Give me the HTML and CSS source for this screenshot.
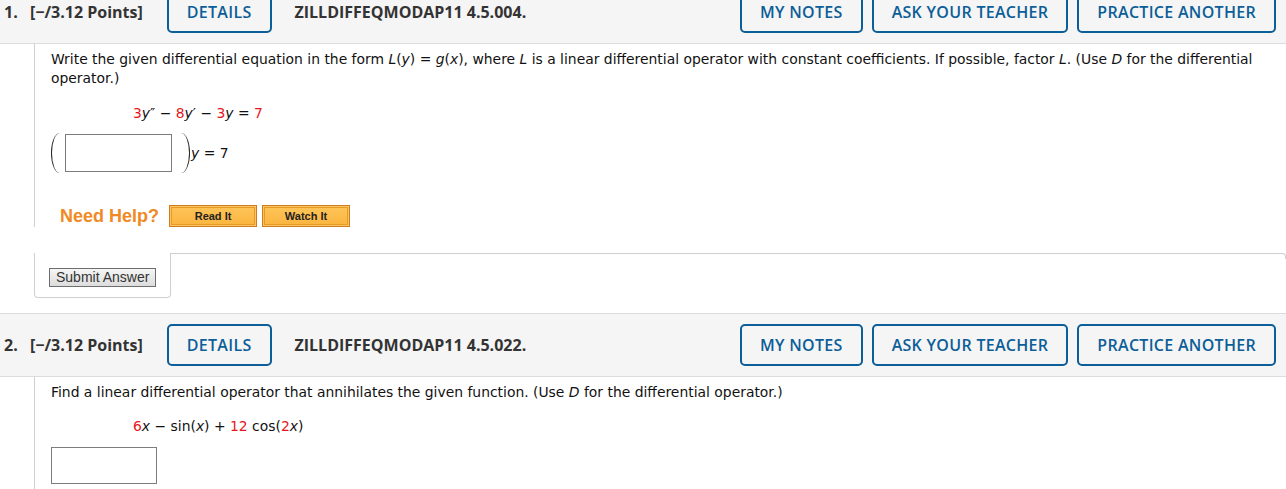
FILE: index.html
```html
<!DOCTYPE html>
<html lang="en">
<head>
<meta charset="utf-8">
<title>Questions</title>
<link rel="stylesheet" href="styles.css">
</head>
<body>
<div class="page">
  <section class="question">
    <div class="q-head">
      <span class="q-num">1.</span>
      <span class="q-points">[−/3.12 Points]</span>
      <button class="btn">DETAILS</button>
      <span class="q-title">ZILLDIFFEQMODAP11 4.5.004.</span>
      <div class="head-right">
        <button class="btn">MY NOTES</button>
        <button class="btn">ASK YOUR TEACHER</button>
        <button class="btn">PRACTICE ANOTHER</button>
      </div>
    </div>
    <div class="q-body">
      <p class="prompt">Write the given differential equation in the form <i>L</i>(<i>y</i>) = <i>g</i>(<i>x</i>), where <i>L</i> is a linear differential operator with constant coefficients. If possible, factor <i>L</i>. (Use <i>D</i> for the differential<br>operator.)</p>
      <p class="eq eq1"><span class="r">3</span><i>y</i>″ − <span class="r">8</span><i>y</i>′ − <span class="r">3</span><i>y</i> = <span class="r">7</span></p>
      <div class="paren-row">
        <span class="paren left"></span>
        <span class="answer-box"></span>
        <span class="paren right"></span>
        <span class="after"><i>y</i> = 7</span>
      </div>
      <div class="help-row">
        <span class="need-help">Need Help?</span>
        <button class="help-btn">Read It</button>
        <button class="help-btn">Watch It</button>
      </div>
    </div>
    <div class="q-foot">
      <div class="submit-cell"><button class="submit">Submit Answer</button></div>
      <div class="foot-fill"></div>
    </div>
  </section>

  <section class="question q2">
    <div class="q-head">
      <span class="q-num">2.</span>
      <span class="q-points">[−/3.12 Points]</span>
      <button class="btn">DETAILS</button>
      <span class="q-title">ZILLDIFFEQMODAP11 4.5.022.</span>
      <div class="head-right">
        <button class="btn">MY NOTES</button>
        <button class="btn">ASK YOUR TEACHER</button>
        <button class="btn">PRACTICE ANOTHER</button>
      </div>
    </div>
    <div class="q-body">
      <p class="prompt">Find a linear differential operator that annihilates the given function. (Use <i>D</i> for the differential operator.)</p>
      <p class="eq eq2"><span class="r">6</span><i>x</i> − sin(<i>x</i>) + <span class="r">12</span> cos(<span class="r">2</span><i>x</i>)</p>
      <span class="answer-box box2"></span>
    </div>
  </section>
</div>
</body>
</html>
```

FILE: styles.css
```css
* { box-sizing: border-box; }
html, body { margin: 0; padding: 0; background: #fff; }
body { overflow: hidden; }
.page { margin-top: -20px; }

.q-head {
  display: flex;
  align-items: center;
  background: #f5f5f5;
  border-top: 1px solid #dcdcdc;
  border-bottom: 1px solid #dcdcdc;
  padding: 10px 10px 10px 4px;
  font-family: "Open Sans", sans-serif;
  font-size: 16px;
  color: #333;
}
.q-num { font-weight: 700; width: 26px; }
.q-points { font-weight: 700; margin-right: 24px; }
.q-title { font-weight: 700; margin-left: 23px; }
.head-right { margin-left: auto; display: flex; gap: 9px; }
.btn {
  height: 42px;
  padding: 0 18px;
  border: 2px solid #0c5e98;
  border-radius: 5px;
  background: transparent;
  color: #0c5e98;
  font-family: "Open Sans", sans-serif;
  font-weight: 600;
  font-size: 16px;
  line-height: 20px;
  letter-spacing: 0.3px;
}

.q-body {
  margin-left: 34px;
  border-left: 1px solid #cfcfcf;
  padding: 6px 0 0 16px;
  font-family: "DejaVu Sans", Verdana, sans-serif;
  font-size: 13.9px;
  line-height: 19px;
  color: #111;
}
.q-body p { margin: 0; }
.r { color: #e8161b; }
.eq { padding-left: 82px; }
.eq1 { margin-top: 16px !important; }
.eq2 { margin-top: 15px !important; }

.paren-row { display: flex; align-items: center; margin-top: 10px; height: 40px; }
.paren { display: block; width: 9px; height: 40px; border: 0 solid #222; }
.paren.left { border-left-width: 1.5px; border-radius: 100% 0 0 100% / 50% 0 0 50%; }
.paren.right { border-right-width: 1.5px; border-radius: 0 100% 100% 0 / 0 50% 50% 0; margin-left: 9px; }
.answer-box { display: block; width: 107px; height: 38px; border: 1px solid #7c7c7c; background: #fff; margin-left: 5px; }
.after { margin-left: 1px; }

.help-row { display: flex; align-items: center; margin-top: 32px; height: 22px; }
.need-help {
  font-family: "Liberation Sans", Arial, sans-serif;
  font-weight: 700;
  font-size: 18px;
  color: #f08a24;
  margin-left: 9px;
  margin-right: 10px;
}
.help-btn {
  width: 88px;
  height: 22px;
  margin-right: 5px;
  border: 1px solid #cf7a1e;
  box-shadow: inset 0 0 0 1px #fcc560, inset 0 0 0 2px #e59a2a;
  background: linear-gradient(#fec55a, #fbb43e);
  font-family: "Liberation Sans", Arial, sans-serif;
  font-weight: 700;
  font-size: 11px;
  color: #222;
  padding: 0;
}

.q-foot { display: flex; align-items: flex-start; margin-left: 34px; margin-top: 27px; }
.submit-cell {
  width: 137px;
  padding: 15px 0 10px 14px;
  border: 1px solid #cfcfcf;
  border-top: 0;
  border-radius: 0 0 4px 4px;
  margin-top: -1px;
}
.foot-fill {
  flex: 1;
  height: 6px;
  border-top: 1px solid #cfcfcf;
  border-right: 1px solid #cfcfcf;
  border-top-right-radius: 4px;
  margin-top: -1px;
  margin-left: -1px;
}
.submit {
  display: block;
  height: 19px;
  padding: 0 6px;
  border: 1px solid #6e6e6e;
  border-radius: 0;
  background: linear-gradient(#f6f6f6, #dcdcdc);
  font-family: "Liberation Sans", Arial, sans-serif;
  font-size: 14px;
  line-height: 17px;
  color: #333;
}

.q2 { margin-top: 15px; }
.q2 .q-body { height: 200px; }
.box2 { margin-left: 0; margin-top: 11px; width: 106px; height: 37px; }
```
